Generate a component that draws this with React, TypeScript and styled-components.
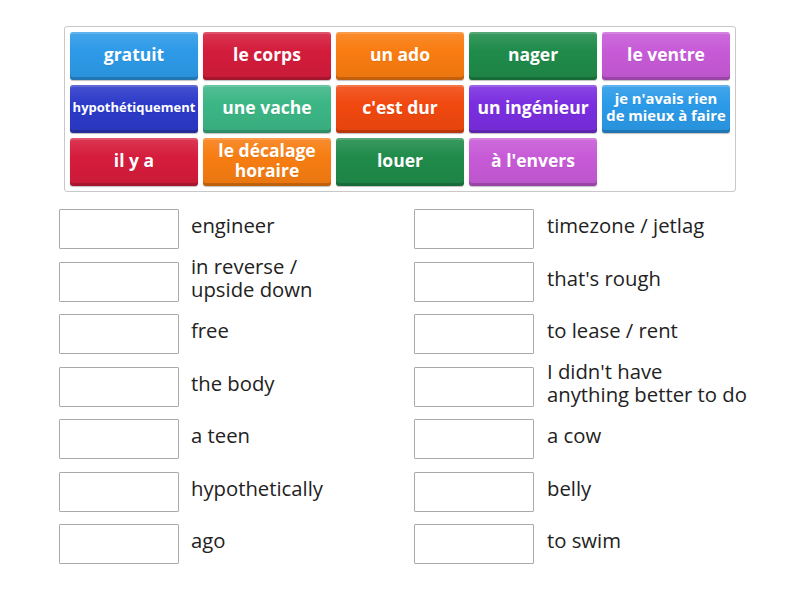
import React from 'react';
import styled, { createGlobalStyle } from 'styled-components';

const GlobalStyle = createGlobalStyle`
  html, body {
    margin: 0;
    padding: 0;
    background: #ffffff;
  }
  body {
    font-family: "Open Sans", "Liberation Sans", sans-serif;
  }
`;

type Tile = { text: string; color: string; size?: number; line?: number };

const tiles: Tile[] = [
  { text: 'gratuit', color: '#2d9ae8' },
  { text: 'le corps', color: '#d41c3c' },
  { text: 'un ado', color: '#f97c10' },
  { text: 'nager', color: '#1f8b4a' },
  { text: 'le ventre', color: '#c75ad7' },
  { text: 'hypothétiquement', color: '#2c3ac9', size: 13 },
  { text: 'une vache', color: '#3cb685' },
  { text: "c'est dur", color: '#f1480f' },
  { text: 'un ingénieur', color: '#7a2ee0' },
  { text: "je n'avais rien\nde mieux à faire", color: '#2b9ae8', size: 14.8, line: 17 },
  { text: 'il y a', color: '#d61c3c' },
  { text: 'le décalage\nhoraire', color: '#f77d12', line: 20 },
  { text: 'louer', color: '#1f8b4a' },
  { text: "à l'envers", color: '#c75ad7' },
];

const pairs: [string, string][] = [
  ['engineer', 'timezone / jetlag'],
  ['in reverse /\nupside down', "that's rough"],
  ['free', 'to lease / rent'],
  ['the body', "I didn't have\nanything better to do"],
  ['a teen', 'a cow'],
  ['hypothetically', 'belly'],
  ['ago', 'to swim'],
];

const Page = styled.div`
  width: 800px;
  height: 600px;
  padding-top: 26px;
  box-sizing: border-box;
`;

const TileBank = styled.div`
  width: 672px;
  margin-left: 64px;
  box-sizing: border-box;
  border: 1px solid #c8c8c8;
  border-radius: 3px;
  padding: 5px;
  display: grid;
  grid-template-columns: repeat(5, 128px);
  grid-auto-rows: 48px;
  gap: 5px;
`;

const TileBox = styled.div<{ $color: string; $size: number; $line: number }>`
  background: ${(p) => p.$color};
  background-image: linear-gradient(to bottom, rgba(255, 255, 255, 0.12), rgba(255, 255, 255, 0) 40%, rgba(0, 0, 0, 0.06));
  border-radius: 3px;
  box-shadow:
    inset 0 -3px 0 rgba(0, 0, 0, 0.18),
    inset 0 2px 0 rgba(255, 255, 255, 0.15),
    0 1px 1px rgba(0, 0, 0, 0.25);
  color: #ffffff;
  font-weight: 700;
  font-size: ${(p) => p.$size}px;
  line-height: ${(p) => p.$line}px;
  text-align: center;
  white-space: pre-line;
  display: flex;
  align-items: center;
  justify-content: center;
  padding: 0 1px 5px;
  box-sizing: border-box;
  text-shadow: 0 1px 0 rgba(0, 0, 0, 0.08);
`;

const Answers = styled.div`
  margin-top: 17px;
  margin-left: 59px;
  display: grid;
  grid-template-columns: 355px 355px;
  grid-auto-rows: 40px;
  row-gap: 12.5px;
`;

const Row = styled.div`
  display: flex;
  align-items: center;
`;

const DropBox = styled.div`
  width: 120px;
  height: 40px;
  box-sizing: border-box;
  border: 1px solid #aaaaaa;
  border-radius: 1px;
  flex-shrink: 0;
`;

const Label = styled.div<{ $right?: boolean }>`
  margin-left: ${(p) => (p.$right ? 13 : 12)}px;
  font-size: 20.3px;
  line-height: 23px;
  color: #222222;
  white-space: pre;
  padding-bottom: 7px;
`;

const Answer = ({ text, right }: { text: string; right?: boolean }) => (
  <Row>
    <DropBox />
    <Label $right={right}>{text}</Label>
  </Row>
);

const App = () => (
  <Page>
    <GlobalStyle />
    <TileBank>
      {tiles.map((t) => (
        <TileBox key={t.text} $color={t.color} $size={t.size ?? 17.5} $line={t.line ?? 22}>
          {t.text}
        </TileBox>
      ))}
    </TileBank>
    <Answers>
      {pairs.map(([l, r]) => (
        <React.Fragment key={l}>
          <Answer text={l} />
          <Answer text={r} right />
        </React.Fragment>
      ))}
    </Answers>
  </Page>
);

export default App;
